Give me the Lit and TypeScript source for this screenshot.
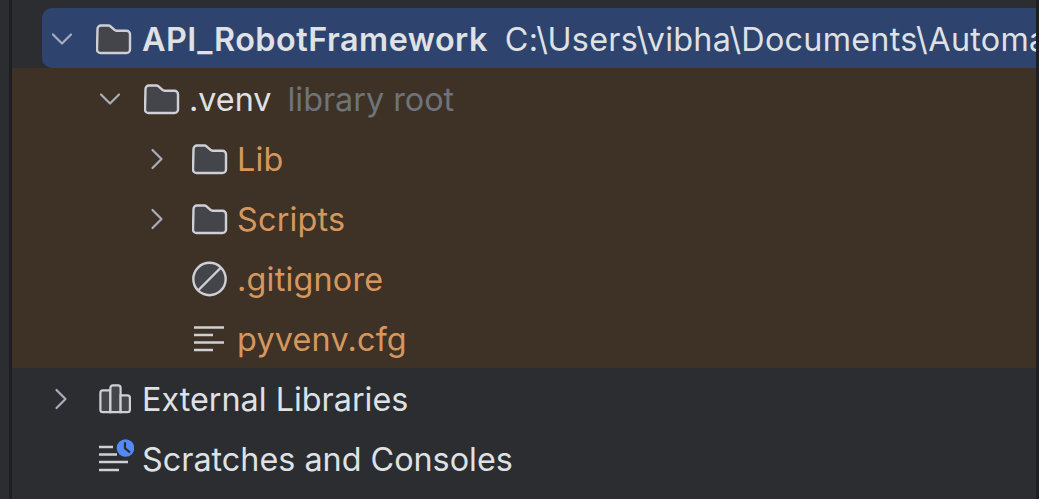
import { LitElement, html, css, svg } from 'lit';
import { customElement } from 'lit/decorators.js';

const chevronDown = svg`<path d="M2 2.5 L11 11.5 L20 2.5" fill="none" stroke="#a8adbd" stroke-width="2.2" stroke-linecap="round" stroke-linejoin="round"/>`;
const chevronRight = svg`<path d="M2.5 2 L11.5 11 L2.5 20" fill="none" stroke="#a8adbd" stroke-width="2.2" stroke-linecap="round" stroke-linejoin="round"/>`;

const folder = html`<svg class="icon" width="38" height="32" viewBox="0 0 38 32">
  <path d="M1.5 6 a3.5 3.5 0 0 1 3.5 -3.5 h7.5 a3 3 0 0 1 2 .8 l4 3.6 a3 3 0 0 0 2 .8 h10 a3.5 3.5 0 0 1 3.5 3.5 v15.3 a3.5 3.5 0 0 1 -3.5 3.5 h-26 a3.5 3.5 0 0 1 -3.5 -3.5 z" fill="#43454a" stroke="#ced0d6" stroke-width="2.4"/>
</svg>`;

const ignored = html`<svg class="icon" width="38" height="36" viewBox="0 0 38 36">
  <circle cx="17.5" cy="18" r="16.2" fill="#43454a" stroke="#ced0d6" stroke-width="2.4"/>
  <path d="M6.5 29 L28.5 7" stroke="#ced0d6" stroke-width="2.4"/>
</svg>`;

const textFile = html`<svg class="icon" width="38" height="28" viewBox="0 0 38 28">
  <path d="M2 2.5 H32 M2 10 H21 M2 17.5 H32 M2 25 H21" stroke="#ced0d6" stroke-width="2.4"/>
</svg>`;

const libraries = html`<svg class="icon" width="38" height="32" viewBox="0 0 38 32">
  <path d="M14.4 7.4 h-7.5 a2.5 2.5 0 0 0 -2.5 2.5 v16.8 a2.5 2.5 0 0 0 2.5 2.5 h7.5 z" fill="#43454a" stroke="#ced0d6" stroke-width="2.2"/>
  <path d="M14.4 4.9 a2.5 2.5 0 0 1 2.5 -2.5 h5.2 a2.5 2.5 0 0 1 2.5 2.5 v24.3 h-10.2 z" fill="#43454a" stroke="#ced0d6" stroke-width="2.2"/>
  <path d="M24.6 12.4 h6.8 a2.5 2.5 0 0 1 2.5 2.5 v11.8 a2.5 2.5 0 0 1 -2.5 2.5 h-6.8 z" fill="#43454a" stroke="#ced0d6" stroke-width="2.2"/>
</svg>`;

const scratches = html`<svg class="icon" width="38" height="40" viewBox="0 0 38 40">
  <path d="M3 8 H17 M3 15.5 H21 M3 23 H32 M3 31 H23" stroke="#ced0d6" stroke-width="2.4"/>
  <circle cx="29.5" cy="9" r="8.8" fill="#548af7"/>
  <path d="M29 3.3 V9.3 L34 13.3" fill="none" stroke="#2b2d30" stroke-width="2.2"/>
</svg>`;

@customElement('app-root')
export class AppRoot extends LitElement {
  static styles = css`
    :host {
      display: block;
      width: 1039px;
      height: 499px;
      overflow: hidden;
      background: #2b2d30;
      font-family: 'Inter', sans-serif;
    }
    .layout {
      display: flex;
      height: 100%;
    }
    .gutter {
      width: 9px;
      flex: none;
      border-right: 3px solid #1e1f22;
    }
    .tree {
      flex: 1;
      min-width: 0;
      padding-top: 8px;
      border-right: 3px solid #1e1f22;
    }
    .row {
      display: flex;
      align-items: center;
      box-sizing: border-box;
      height: 60px;
      padding-top: 2px;
      font-size: 32.35px;
      color: #dfe1e5;
      white-space: nowrap;
      overflow: hidden;
    }
    .indent-1 { padding-left: 39px; }
    .indent-2 { padding-left: 87px; }
    .indent-3 { padding-left: 135px; }
    .brown { background: #3e3226; }
    .brown .name-file { color: #d6975f; letter-spacing: 0.22px; }
    .brown .icon { margin-right: 7px; }
    .selected {
      background: #2e436e;
      border-radius: 10px 0 0 10px;
      margin-left: 30px;
      padding-left: 9px;
    }
    .toggle {
      width: 45px;
      flex: none;
      display: flex;
      align-items: center;
    }
    .icon {
      flex: none;
      margin-right: 8px;
    }
    .bold { font-weight: 600; letter-spacing: 0.5px; }
    .path { margin-left: 17px; letter-spacing: 0.25px; }
    .hint { margin-left: 16px; color: #6f737a; }
    .chev-d { width: 22px; height: 14px; }
    .chev-r { width: 14px; height: 22px; margin-left: 3px; }
  `;

  render() {
    const down = html`<span class="toggle"><svg class="chev-d" viewBox="0 0 22 14">${chevronDown}</svg></span>`;
    const right = html`<span class="toggle"><svg class="chev-r" viewBox="0 0 14 22">${chevronRight}</svg></span>`;
    const none = html`<span class="toggle"></span>`;
    return html`
      <div class="layout">
        <div class="gutter"></div>
        <div class="tree">
          <div class="row selected">${down}${folder}<span class="bold">API_RobotFramework</span><span class="path">C:\\Users\\vibha\\Documents\\Automation</span></div>
          <div class="row brown indent-2">${down}${folder}<span>.venv</span><span class="hint">library root</span></div>
          <div class="row brown indent-3">${right}${folder}<span class="name-file">Lib</span></div>
          <div class="row brown indent-3">${right}${folder}<span class="name-file">Scripts</span></div>
          <div class="row brown indent-3">${none}${ignored}<span class="name-file">.gitignore</span></div>
          <div class="row brown indent-3">${none}${textFile}<span class="name-file">pyvenv.cfg</span></div>
          <div class="row indent-1">${right}${libraries}<span>External Libraries</span></div>
          <div class="row indent-1">${none}${scratches}<span>Scratches and Consoles</span></div>
        </div>
      </div>
    `;
  }
}
